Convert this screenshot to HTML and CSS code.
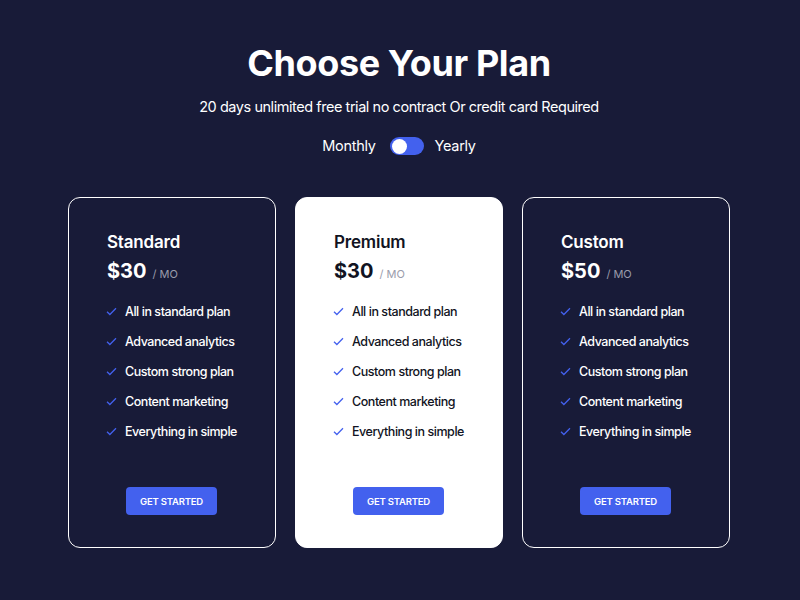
FILE: index.html
```html
<!DOCTYPE html>
<html>
<head>
<meta charset="utf-8">
<link rel="stylesheet" href="styles.css">
</head>
<body>
<main class="page">
  <h1 class="title">Choose Your Plan</h1>
  <p class="subtitle">20 days unlimited free trial no contract Or credit card Required</p>
  <div class="toggle-row">
    <span>Monthly</span>
    <span class="switch"><span class="knob"></span></span>
    <span>Yearly</span>
  </div>
  <section class="cards">
    <div class="card">
      <h2 class="plan">Standard</h2>
      <div class="price"><span class="amount">$30</span><span class="per">/ MO</span></div>
      <ul class="features">
        <li><svg class="check" viewBox="0 0 12 10"><path d="M1 5.2 L4.2 8.4 L11 1.4"/></svg>All in standard plan</li>
        <li><svg class="check" viewBox="0 0 12 10"><path d="M1 5.2 L4.2 8.4 L11 1.4"/></svg>Advanced analytics</li>
        <li><svg class="check" viewBox="0 0 12 10"><path d="M1 5.2 L4.2 8.4 L11 1.4"/></svg>Custom strong plan</li>
        <li><svg class="check" viewBox="0 0 12 10"><path d="M1 5.2 L4.2 8.4 L11 1.4"/></svg>Content marketing</li>
        <li><svg class="check" viewBox="0 0 12 10"><path d="M1 5.2 L4.2 8.4 L11 1.4"/></svg>Everything in simple</li>
      </ul>
      <button class="btn">GET STARTED</button>
    </div>
    <div class="card card-light">
      <h2 class="plan">Premium</h2>
      <div class="price"><span class="amount">$30</span><span class="per">/ MO</span></div>
      <ul class="features">
        <li><svg class="check" viewBox="0 0 12 10"><path d="M1 5.2 L4.2 8.4 L11 1.4"/></svg>All in standard plan</li>
        <li><svg class="check" viewBox="0 0 12 10"><path d="M1 5.2 L4.2 8.4 L11 1.4"/></svg>Advanced analytics</li>
        <li><svg class="check" viewBox="0 0 12 10"><path d="M1 5.2 L4.2 8.4 L11 1.4"/></svg>Custom strong plan</li>
        <li><svg class="check" viewBox="0 0 12 10"><path d="M1 5.2 L4.2 8.4 L11 1.4"/></svg>Content marketing</li>
        <li><svg class="check" viewBox="0 0 12 10"><path d="M1 5.2 L4.2 8.4 L11 1.4"/></svg>Everything in simple</li>
      </ul>
      <button class="btn">GET STARTED</button>
    </div>
    <div class="card">
      <h2 class="plan">Custom</h2>
      <div class="price"><span class="amount">$50</span><span class="per">/ MO</span></div>
      <ul class="features">
        <li><svg class="check" viewBox="0 0 12 10"><path d="M1 5.2 L4.2 8.4 L11 1.4"/></svg>All in standard plan</li>
        <li><svg class="check" viewBox="0 0 12 10"><path d="M1 5.2 L4.2 8.4 L11 1.4"/></svg>Advanced analytics</li>
        <li><svg class="check" viewBox="0 0 12 10"><path d="M1 5.2 L4.2 8.4 L11 1.4"/></svg>Custom strong plan</li>
        <li><svg class="check" viewBox="0 0 12 10"><path d="M1 5.2 L4.2 8.4 L11 1.4"/></svg>Content marketing</li>
        <li><svg class="check" viewBox="0 0 12 10"><path d="M1 5.2 L4.2 8.4 L11 1.4"/></svg>Everything in simple</li>
      </ul>
      <button class="btn">GET STARTED</button>
    </div>
  </section>
</main>
</body>
</html>
```

FILE: styles.css
```css
html, body {
  margin: 0;
  padding: 0;
  background: #181b38;
  width: 800px;
  height: 600px;
  overflow: hidden;
}
.page {
  font-family: Inter, "Noto Sans", sans-serif;
  color: #ffffff;
  display: flex;
  flex-direction: column;
  align-items: center;
  padding-top: 40px;
  padding-right: 2px;
}
.title {
  margin: 0;
  font-size: 36px;
  line-height: 46px;
  font-weight: 700;
  letter-spacing: -0.4px;
}
.subtitle {
  margin: 10px 0 0;
  font-size: 14.5px;
  line-height: 22px;
  font-weight: 400;
  letter-spacing: -0.45px;
}
.toggle-row {
  margin-top: 18px;
  display: flex;
  align-items: center;
  font-size: 14.5px;
  line-height: 20px;
  letter-spacing: -0.3px;
}
.switch {
  width: 34px;
  height: 18px;
  margin: 0 11px 0 14px;
  border-radius: 9px;
  background: #4361ee;
  display: flex;
  align-items: center;
  padding-left: 2px;
  box-sizing: border-box;
}
.knob {
  width: 15px;
  height: 15px;
  border-radius: 50%;
  background: #ffffff;
}
.cards {
  margin-top: 41px;
  display: flex;
  gap: 19px;
}
.card {
  width: 208px;
  height: 351px;
  box-sizing: border-box;
  border: 1px solid #ffffff;
  border-radius: 12px;
  padding: 33px 0 0 38px;
  display: flex;
  flex-direction: column;
  color: #ffffff;
}
.card-light {
  background: #ffffff;
  color: #111322;
}
.plan {
  margin: 0;
  font-size: 17px;
  line-height: 22px;
  font-weight: 600;
  letter-spacing: -0.2px;
}
.price {
  margin-top: 4px;
  display: flex;
  align-items: baseline;
  height: 28px;
}
.amount {
  font-size: 20px;
  line-height: 28px;
  font-weight: 700;
}
.per {
  margin-left: 6px;
  font-size: 11px;
  color: #9a9cab;
}
.features {
  list-style: none;
  margin: 11px 0 0;
  padding: 0;
}
.features li {
  height: 30px;
  display: flex;
  align-items: center;
  font-size: 12.5px;
  font-weight: 500;
  letter-spacing: -0.45px;
}
.check {
  width: 11px;
  height: 9px;
  margin-right: 8px;
  margin-left: -1px;
  fill: none;
  stroke: #4361ee;
  stroke-width: 1.4;
}
.btn {
  margin: 41px 0 0 19px;
  width: 91px;
  height: 28px;
  border: none;
  border-radius: 4px;
  background: #4361ee;
  color: #ffffff;
  font-family: Inter, "Noto Sans", sans-serif;
  font-size: 9.5px;
  font-weight: 600;
  letter-spacing: -0.2px;
  padding: 0;
}
```
